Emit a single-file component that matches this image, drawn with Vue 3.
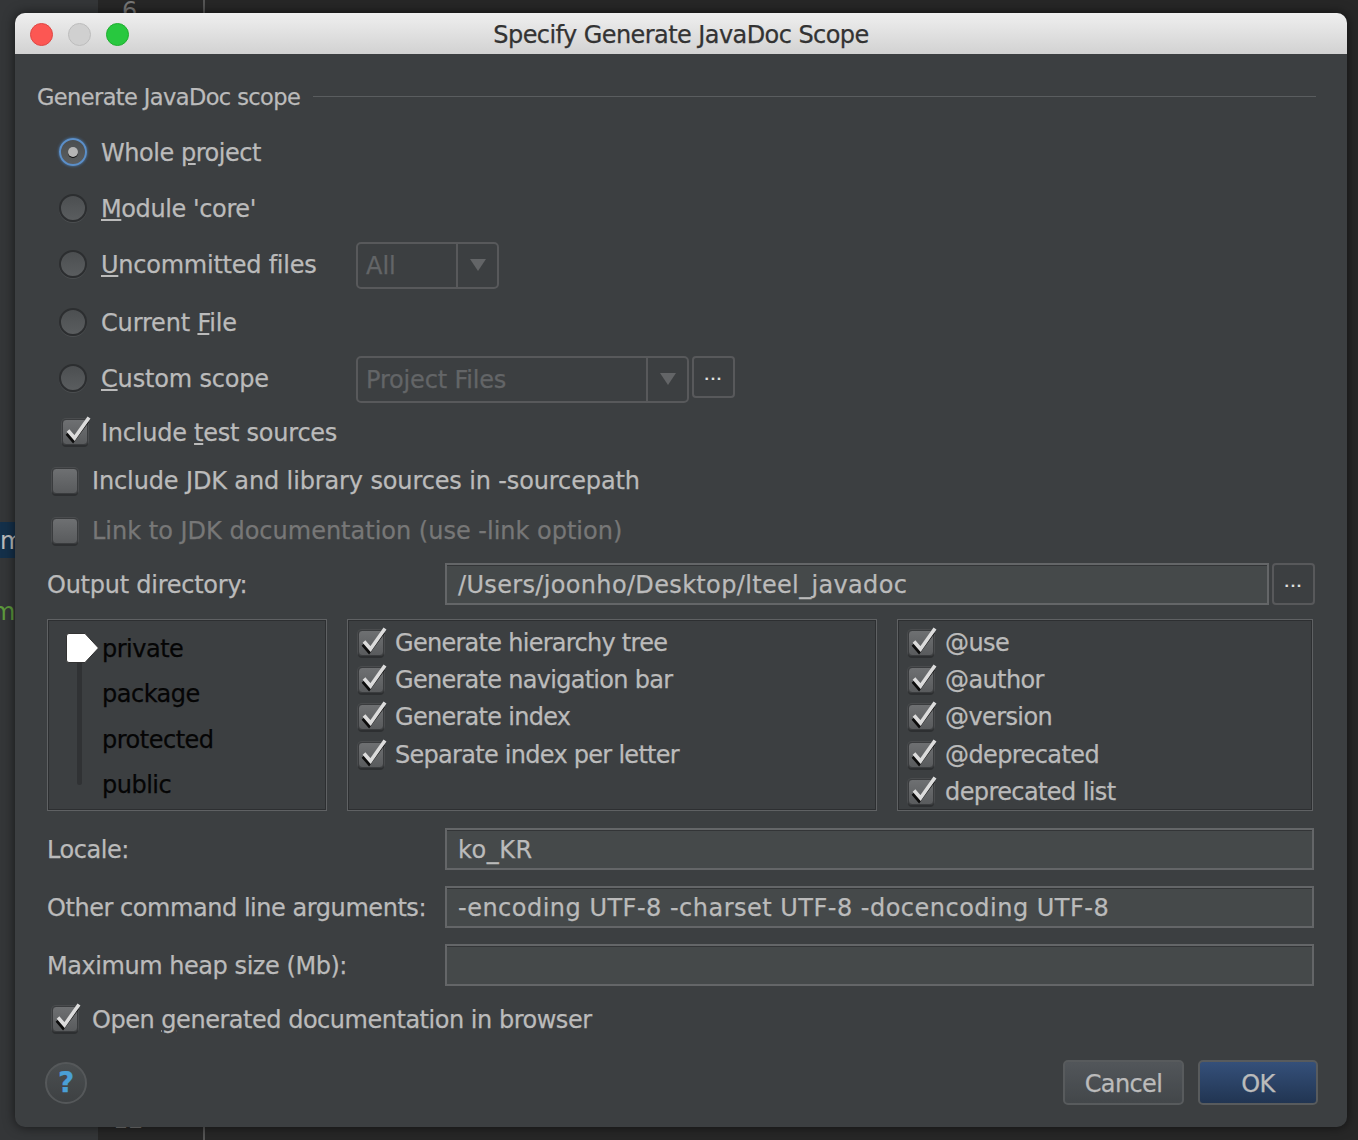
<script setup>
const levels = ["private", "package", "protected", "public"];
const generateOptions = [
  "Generate hierarchy tree",
  "Generate navigation bar",
  "Generate index",
  "Separate index per letter",
];
const tagOptions = ["@use", "@author", "@version", "@deprecated", "deprecated list"];
const textFields = [
  { label: "Locale:", value: "ko_KR" },
  { label: "Other command line arguments:", value: "-encoding UTF-8 -charset UTF-8 -docencoding UTF-8" },
  { label: "Maximum heap size (Mb):", value: "" },
];
</script>

<template>
  <div class="screen">
    <svg class="defs" width="0" height="0">
      <symbol id="tick" viewBox="0 0 30 30">
        <path d="M5 17.500l6 7L25.500 5" fill="none" stroke="#0c0c0c" stroke-width="3.600" />
        <path d="M6 14.500l6.500 7.500L27 1.500" fill="none" stroke="#dcdcdc" stroke-width="3.600" />
      </symbol>
    </svg>

    <!-- editor behind the dialog -->
    <div class="gutter"></div>
    <div class="gutter-line"></div>
    <span class="line-no">6</span>
    <span class="line-no last">12</span>
    <div class="selected-line">m</div>
    <div class="green-m">m</div>

    <div class="dialog">
      <header class="titlebar">
        <div class="lights">
          <i class="light red"></i>
          <i class="light grey"></i>
          <i class="light green"></i>
        </div>
        <span class="title">Specify Generate JavaDoc Scope</span>
      </header>

      <div class="content">
        <div class="group-title">
          <span>Generate JavaDoc scope</span>
          <i class="group-line"></i>
        </div>

        <div class="radio-row">
          <i class="radio on"><b></b></i>
          <span class="sp-46">Whole <u>p</u>roject</span>
        </div>
        <div class="radio-row">
          <i class="radio"></i>
          <span class="sp-40"><u>M</u>odule 'core'</span>
        </div>
        <div class="radio-row">
          <i class="radio"></i>
          <span class="radio-label sp-24"><u>U</u>ncommitted files</span>
          <div class="combo combo-all">
            <span class="combo-text">All</span>
            <span class="combo-arrow"><i></i></span>
          </div>
        </div>
        <div class="radio-row gap-top">
          <i class="radio"></i>
          <span class="sp-17">Current <u>F</u>ile</span>
        </div>
        <div class="radio-row">
          <i class="radio"></i>
          <span class="radio-label sp-17"><u>C</u>ustom scope</span>
          <div class="combo combo-files">
            <span class="combo-text sp-17">Project Files</span>
            <span class="combo-arrow"><i></i></span>
          </div>
          <div class="dots-btn small"><span>...</span></div>
        </div>

        <label class="check-row test-row">
          <span class="box"><svg><use href="#tick" /></svg></span>
          <span class="sp-24 lift">Include <u>t</u>est sources</span>
        </label>
        <label class="check-row jdk-row">
          <span class="box"></span>
          <span class="sp-13">Include JDK and library sources in -sourcepath</span>
        </label>
        <label class="check-row jdk-row disabled">
          <span class="box"></span>
          <span>Link to JDK documentation (use -link option)</span>
        </label>

        <div class="field-row output-row">
          <span class="field-label">Output directory:</span>
          <div class="field output-field">/Users/joonho/Desktop/lteel_javadoc</div>
          <div class="dots-btn"><span>...</span></div>
        </div>

        <div class="panels">
          <div class="panel panel-levels">
            <div class="track"></div>
            <svg class="thumb" width="34" height="30" viewBox="0 0 34 30">
              <path d="M3 .5H19L32.500 15 19 29.500H3A2.500 2.500 0 0 1 .5 27V3A2.500 2.500 0 0 1 3 .5Z" fill="#fff" stroke="#333" />
            </svg>
            <span v-for="level in levels" :key="level" class="level">{{ level }}</span>
          </div>
          <div class="panel panel-generate">
            <label v-for="opt in generateOptions" :key="opt" class="panel-check">
              <span class="box"><svg><use href="#tick" /></svg></span>
              <span>{{ opt }}</span>
            </label>
          </div>
          <div class="panel panel-tags">
            <label v-for="opt in tagOptions" :key="opt" class="panel-check">
              <span class="box"><svg><use href="#tick" /></svg></span>
              <span>{{ opt }}</span>
            </label>
          </div>
        </div>

        <div v-for="f in textFields" :key="f.label" class="field-row text-row">
          <span class="field-label">{{ f.label }}</span>
          <div class="field wide">{{ f.value }}</div>
        </div>

        <label class="check-row open-row">
          <span class="box"><svg><use href="#tick" /></svg></span>
          <span class="sp-48 lift">Open <u>g</u>enerated documentation in browser</span>
        </label>

        <footer class="footer">
          <div class="help">?</div>
          <div class="buttons">
            <button class="btn">Cancel</button>
            <button class="btn primary">OK</button>
          </div>
        </footer>
      </div>
    </div>
  </div>
</template>

<style scoped>
.screen {
  position: relative;
  width: 1358px;
  height: 1140px;
  padding: 13px 11px 13px 15px;
  box-sizing: border-box;
  overflow: hidden;
  background: #272727;
  font-family: "DejaVu Sans", "Liberation Sans", sans-serif;
  font-size: 24px;
  color: #bbbbbb;
}
.defs {
  position: absolute;
}
.gutter {
  position: absolute;
  left: 0;
  top: 0;
  bottom: 0;
  width: 98px;
  background: #343638;
}
.gutter-line {
  position: absolute;
  left: 203px;
  top: 0;
  bottom: 0;
  width: 2px;
  background: #555;
}
.line-no {
  position: absolute;
  left: 122px;
  top: -3px;
  color: #777;
}
.line-no.last {
  left: 113px;
  top: 1106px;
}
.selected-line,
.green-m {
  position: absolute;
  left: -8px;
  width: 23px;
  text-align: right;
}
.selected-line {
  top: 522px;
  height: 36px;
  line-height: 38px;
  background: #14304a;
  left: 0;
  width: 15px;
  color: #bbb;
}
.green-m {
  top: 598px;
  color: #5d9a3c;
}

.dialog {
  position: relative;
  width: 1332px;
  height: 1114px;
  border-radius: 10px;
  overflow: hidden;
  background: #3c3f41;
  box-shadow: 0 0 12px rgba(0, 0, 0, 0.6);
  display: flex;
  flex-direction: column;
  -webkit-text-stroke: 0.25px currentColor;
}
.titlebar {
  position: relative;
  flex: none;
  height: 41px;
  display: flex;
  align-items: center;
  justify-content: center;
  background: linear-gradient(#efefef, #d2d2d2);
  color: #333;
}
.title {
  letter-spacing: -0.57px;
  padding-top: 2px;
}
.lights {
  position: absolute;
  left: 15px;
  top: 10px;
  display: flex;
  gap: 15px;
}
.light {
  width: 23px;
  height: 23px;
  border-radius: 50%;
  box-sizing: border-box;
}
.red {
  background: #fc5753;
  border: 1px solid #df4744;
}
.grey {
  background: #d0d0d0;
  border: 1px solid #bcbcbc;
}
.green {
  background: #28c83f;
  border: 1px solid #1fae30;
}

.content {
  flex: 1;
  padding: 28px 32px 0 32px;
  display: flex;
  flex-direction: column;
}
.group-title {
  display: flex;
  align-items: center;
  height: 28px;
  margin-left: -10px;
  margin-right: -1px;
  gap: 13px;
}
.group-title span {
  font-size: 22.5px;
  letter-spacing: -0.6px;
  padding-top: 2px;
}
.group-line {
  flex: 1;
  height: 1px;
  background: #5a5d5f;
}

/* per-label tracking, DejaVu runs wider than the original Lucida */
.sp-13 {
  letter-spacing: -0.13px;
}
.sp-17 {
  letter-spacing: -0.17px;
}
.sp-24 {
  letter-spacing: -0.24px;
}
.sp-40 {
  letter-spacing: -0.4px;
}
.sp-46 {
  letter-spacing: -0.46px;
}
.sp-48 {
  letter-spacing: -0.48px;
}
.lift {
  padding-top: 2px;
}

.radio-row {
  display: flex;
  align-items: center;
  height: 56px;
  margin-left: 12px;
}
.radio-row > span {
  padding-top: 2px;
}
.radio-row:nth-of-type(2) {
  margin-top: 14px;
}
.gap-top {
  margin-top: 2px;
}
.radio {
  flex: none;
  position: relative;
  width: 28px;
  height: 28px;
  margin-right: 14px;
  box-sizing: border-box;
  border-radius: 50%;
  background: linear-gradient(#4c4f51, #5a5d5f);
  border: 2px solid #2c2e30;
  box-shadow: 0 1px 0 #4c4f51;
}
.radio.on {
  background: linear-gradient(#4b4e50, #5b5e60);
  border: 2px solid #5b8fc9;
  box-shadow: 0 0 3px #4b7fb8;
}
.radio b {
  position: absolute;
  left: 7px;
  top: 7px;
  width: 10px;
  height: 10px;
  border-radius: 50%;
  background: #b5b5b5;
  box-shadow: 0 1px 0 #111;
}
.radio-label {
  width: 255px;
}

.combo {
  display: flex;
  height: 47px;
  box-sizing: border-box;
  border: 2px solid #58595b;
  border-radius: 5px;
  color: #636567;
}
.combo-all {
  width: 143px;
  margin-top: 2px;
}
.combo-files {
  width: 333px;
  margin-top: 2px;
}
.combo-text {
  flex: 1;
  padding-left: 8px;
  line-height: 45px;
}
.combo-arrow {
  flex: none;
  width: 39px;
  border-left: 2px solid #58595b;
  display: flex;
  align-items: center;
  justify-content: center;
}
.combo-arrow i {
  width: 0;
  height: 0;
  border-left: 8px solid transparent;
  border-right: 8px solid transparent;
  border-top: 12px solid #636567;
}
.dots-btn {
  flex: none;
  width: 43px;
  height: 42px;
  box-sizing: border-box;
  margin-left: 3px;
  border: 2px solid #58595b;
  border-radius: 4px;
  display: flex;
  align-items: center;
  justify-content: center;
}
.dots-btn span {
  font-size: 13px;
  font-weight: bold;
  line-height: 1;
  letter-spacing: 1.2px;
  color: #e0e0e0;
  padding-bottom: 3px;
  -webkit-text-stroke: 0;
}
.dots-btn.small {
  margin-top: -3px;
}

.check-row {
  display: flex;
  align-items: center;
}
.box {
  flex: none;
  position: relative;
  width: 26px;
  height: 26px;
  box-sizing: border-box;
  border-radius: 4px;
  background: linear-gradient(#6e7072, #595b5d);
  border: 1px solid #3a3c3e;
  box-shadow: 0 2px 0 #2d2f31, 0 0 0 1px #4a4c4e;
}
.box svg {
  position: absolute;
  left: -1px;
  top: -4px;
  width: 30px;
  height: 30px;
}
.test-row {
  height: 50px;
  margin-left: 15px;
  gap: 13px;
  margin-top: 1px;
}
.jdk-row {
  height: 48px;
  margin-left: 5px;
  gap: 14px;
}
.disabled {
  color: #777;
  margin-top: 2px;
}
.open-row {
  height: 40px;
  margin-left: 5px;
  gap: 14px;
  margin-top: 13px;
}

.field-row {
  display: flex;
  align-items: center;
}
.field-label {
  flex: none;
  width: 398px;
  padding-top: 2px;
  letter-spacing: -0.45px;
}
.field {
  box-sizing: border-box;
  height: 42px;
  padding-left: 11px;
  line-height: 41px;
  background: #45494a;
  border: 2px solid #646668;
  box-shadow: inset 0 1px 0 #333537;
  color: #bbbbbb;
  letter-spacing: 0.49px;
}
.output-row {
  margin-top: 8px;
}
.output-row .field-label {
  letter-spacing: -0.25px;
}
.output-field {
  width: 824px;
  letter-spacing: 0.34px;
}
.wide {
  width: 869px;
}
.text-row {
  margin-top: 16px;
}
.panels + .text-row {
  margin-top: 18px;
}

.panels {
  display: flex;
  gap: 22px;
  margin-top: 15px;
  margin-left: 1px;
  height: 190px;
}
.panel {
  position: relative;
  box-sizing: border-box;
  border: 1px solid #2d2f31;
  box-shadow: 0 0 0 1px #5f6163;
}
.panel-levels {
  width: 278px;
  padding: 6px 0 1px 53px;
  display: flex;
  flex-direction: column;
  justify-content: space-between;
  color: #050505;
  letter-spacing: -0.5px;
}
.level {
  line-height: 45px;
}
.track {
  position: absolute;
  left: 28px;
  top: 36px;
  width: 5px;
  height: 128px;
  border-radius: 3px;
  background: #303234;
}
.thumb {
  position: absolute;
  left: 17px;
  top: 12px;
}
.panel-generate {
  width: 528px;
  letter-spacing: -0.72px;
}
.panel-tags {
  width: 414px;
  letter-spacing: -0.6px;
}
.panel-generate,
.panel-tags {
  padding: 3px 0 0 9px;
}
.panel-check {
  display: flex;
  align-items: center;
  height: 37.3px;
  gap: 11px;
}

.footer {
  display: flex;
  align-items: center;
  justify-content: space-between;
  margin-top: 21px;
  margin-left: -2px;
  margin-right: -3px;
}
.help {
  width: 42px;
  height: 42px;
  box-sizing: border-box;
  border: 2px solid #55585a;
  border-radius: 50%;
  background: linear-gradient(#4a4e50, #3e4143);
  color: #4a9fd6;
  font-weight: bold;
  font-size: 28px;
  line-height: 37px;
  text-align: center;
}
.buttons {
  display: flex;
  gap: 14px;
}
.btn {
  width: 121px;
  height: 45px;
  box-sizing: border-box;
  border: 2px solid #585b5d;
  border-radius: 5px;
  background: linear-gradient(#52565a, #43474a);
  color: #bbbbbb;
  font: inherit;
  letter-spacing: -0.6px;
  padding: 2px 0 0;
}
.primary {
  width: 120px;
  background: linear-gradient(#35507a, #213552);
}
</style>
